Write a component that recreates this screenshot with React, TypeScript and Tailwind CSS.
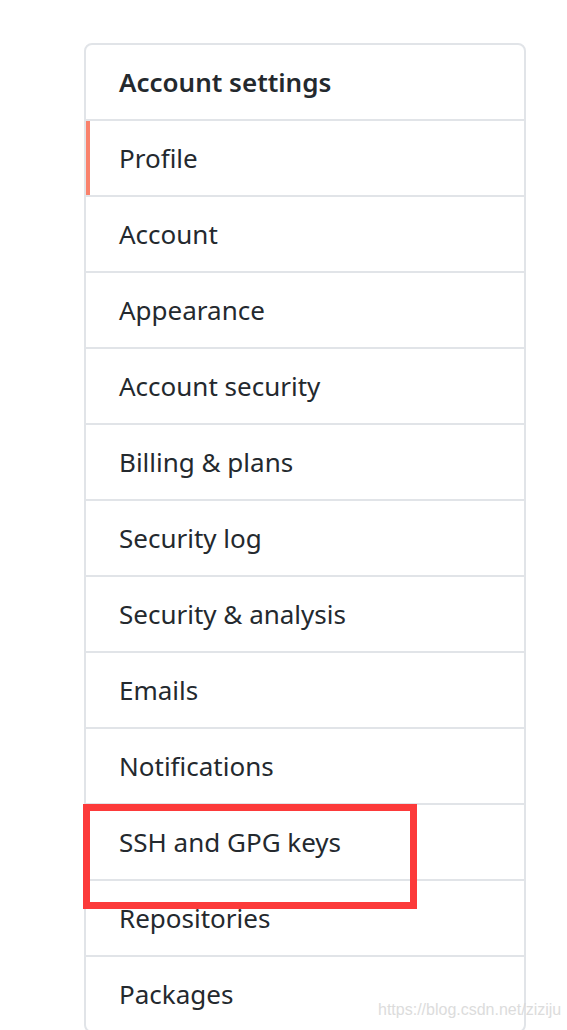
const items = [
  'Profile',
  'Account',
  'Appearance',
  'Account security',
  'Billing & plans',
  'Security log',
  'Security & analysis',
  'Emails',
  'Notifications',
  'SSH and GPG keys',
  'Repositories',
  'Packages',
]

export default function App() {
  return (
    <div className="relative min-h-[1030px] bg-white pt-[43px] pl-[84px] font-['Noto_Sans',sans-serif] text-[#24292e] overflow-hidden">
      {/* Settings menu */}
      <nav className="w-[442px] border-2 border-[#e1e4e8] rounded-[8px] bg-white">
        <div className="h-[74px] flex items-center pl-[33px] text-[26px] font-semibold">
          Account settings
        </div>
        {items.map((item, i) => (
          <a
            key={item}
            href="#"
            className={
              'relative h-[76px] flex items-center pl-[33px] text-[26px] border-t-2 border-[#e1e4e8] ' +
              (i === 0 ? 'before:content-[""] before:absolute before:left-0 before:top-0 before:bottom-0 before:w-[4px] before:bg-[#f9826c]' : '')
            }
          >
            {item}
          </a>
        ))}
      </nav>

      {/* annotation box */}
      <div className="absolute left-[83px] top-[804px] w-[334px] h-[105px] border-[7px] border-[#fc3a3a]" />

      {/* watermark */}
      <div className="absolute left-[378px] top-[998px] text-[16px] text-[#d9d9d9] font-['Liberation_Sans',sans-serif] opacity-90">
        https://blog.csdn.net/ziziju
      </div>
    </div>
  )
}
